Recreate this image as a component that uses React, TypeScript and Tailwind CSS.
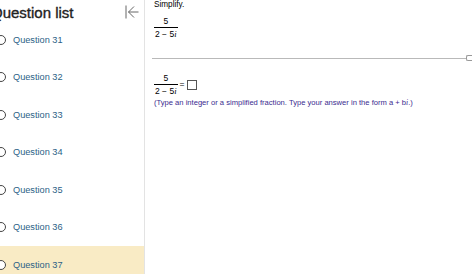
import React from 'react';

const questions = [31, 32, 33, 34, 35, 36, 37];

const Fraction: React.FC = () => (
  <div className="inline-flex flex-col items-center text-[8.5px] leading-[10px] text-black">
    <span className="px-[1px]">5</span>
    <span className="h-px w-full bg-black mt-[1px] mb-[1px]" />
    <span className="px-[1px] whitespace-nowrap">
      2 − 5<span className="italic font-['Liberation_Serif',serif]">i</span>
    </span>
  </div>
);

const App: React.FC = () => {
  return (
    <div className="flex w-[474px] h-[274px] overflow-hidden bg-white font-['Liberation_Sans',Arial,sans-serif]">
      <aside className="w-[145px] shrink-0 border-r border-[#e3e3e3] flex flex-col">
        <div className="h-[21px] mt-[3px] mb-[1px] flex items-center justify-between pr-[5px]">
          <h2 className="ml-[-9px] mt-[2px] text-[15px] text-[#222] leading-none [-webkit-text-stroke:0.35px_#222]">
            Question list
          </h2>
          <svg width="14" height="14" viewBox="0 0 14 14" fill="none" stroke="#666" strokeWidth="1" className="mt-[1px]">
            <path d="M1 0.5v13" />
            <path d="M13.5 7H3.5" />
            <path d="M9 1.5 3.5 7 9 12.5" />
          </svg>
        </div>
        {questions.map((q) => (
          <div
            key={q}
            className={`h-[37.5px] shrink-0 flex items-center gap-[7px] ${q === 37 ? 'bg-[#f9ebc5]' : ''}`}
          >
            <span className="ml-[-4px] w-[10px] h-[10px] rounded-full border border-[#444] bg-white" />
            <span className="mt-[2px] text-[9.2px] text-[#2c5f86]">Question {q}</span>
          </div>
        ))}
      </aside>
      <main className="flex-1 flex flex-col">
        <div className="pl-[9px]">
          <p className="text-[8.2px] leading-[10px] text-black">Simplify.</p>
          <div className="mt-[6px] flex">
            <Fraction />
          </div>
        </div>
        <div className="mt-[16px] ml-[7px] mr-[2px] flex items-center">
          <div className="flex-1 h-px bg-[#b9b9b9]" />
          <div className="w-[6px] h-[6px] border border-[#999] border-r-0 rounded-l-[2px]" />
        </div>
        <div className="pl-[9px] mt-[12px]">
          <div className="flex items-center gap-[2px]">
            <Fraction />
            <span className="text-[8.5px] leading-none">=</span>
            <span className="w-[10px] h-[10px] border border-[#555] bg-white" />
          </div>
          <p className="mt-[2px] text-[7.6px] leading-[10px] text-[#3a2c8f]">
            (Type an integer or a simplified fraction. Type your answer in the form a + b<span className="italic font-['Liberation_Serif',serif]">i</span>.)
          </p>
        </div>
      </main>
    </div>
  );
};

export default App;
